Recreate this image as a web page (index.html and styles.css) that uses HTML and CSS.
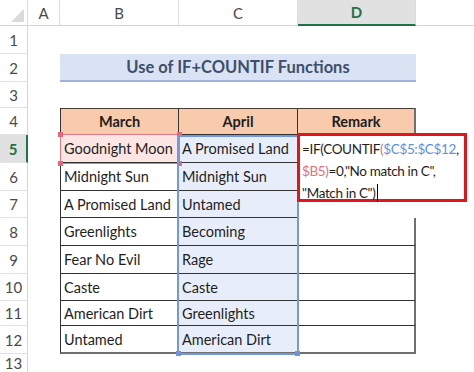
FILE: index.html
```html
<!DOCTYPE html>
<html>
  <head>
    <meta charset="utf-8" />
    <title>Use of IF+COUNTIF Functions</title>
    <link rel="stylesheet" href="styles.css">
  </head>
  <body>
    <main class="sheet">
      <div class="corner"><span class="tri"></span></div>
      <div class="col-head">A</div>
      <div class="col-head">B</div>
      <div class="col-head">C</div>
      <div class="col-head active">D</div>
      <div class="col-head last"></div>

      <div class="rn">1</div>
      <div class="rn">2</div>
      <div class="title">Use of IF+COUNTIF Functions</div>
      <div class="rn">3</div>
      <div class="rn">4</div>
      <div class="th b">March</div>
      <div class="th c">April</div>
      <div class="th d">Remark</div>

      <div class="rn active">5</div>
      <div class="td b sel-b">Goodnight Moon</div>
      <div class="td c sel">A Promised Land</div>
      <div class="td d open"></div>
      <div class="rn">6</div>
      <div class="td b">Midnight Sun</div>
      <div class="td c sel">Midnight Sun</div>
      <div class="td d open"></div>
      <div class="rn">7</div>
      <div class="td b">A Promised Land</div>
      <div class="td c sel">Untamed</div>
      <div class="td d open"></div>
      <div class="rn">8</div>
      <div class="td b">Greenlights</div>
      <div class="td c sel">Becoming</div>
      <div class="td d"></div>
      <div class="rn">9</div>
      <div class="td b">Fear No Evil</div>
      <div class="td c sel">Rage</div>
      <div class="td d"></div>
      <div class="rn">10</div>
      <div class="td b">Caste</div>
      <div class="td c sel">Caste</div>
      <div class="td d"></div>
      <div class="rn">11</div>
      <div class="td b">American Dirt</div>
      <div class="td c sel">Greenlights</div>
      <div class="td d"></div>
      <div class="rn">12</div>
      <div class="td b bottom">Untamed</div>
      <div class="td c sel bottom">American Dirt</div>
      <div class="td d bottom"></div>
      <div class="rn">13</div>

      <!-- overlays -->
      <div class="range-b">
        <i class="h tl"></i><i class="h tr"></i><i class="h bl"></i><i class="h br"></i>
      </div>
      <div class="range-c">
        <i class="h bl"></i><i class="h br"></i>
      </div>
      <div class="editor">=IF(COUNTIF<span class="ref-red">(</span><span class="ref-blue">$C$5:$C$12</span>,<br><span class="ref-red">$B5)</span>=0,"No match in C",<br>"Match in C")<span class="caret"></span></div>
    </main>
  </body>
</html>
```
FILE: styles.css
```css
html,
body {
  margin: 0;
  background: #fff;
}
*,
*:before,
*:after {
  box-sizing: border-box;
}
.sheet {
  position: relative;
  width: 474px;
  height: 372px;
  overflow: hidden;
  display: grid;
  grid-template-columns: 28px 32px 119px 119px 118px 1fr;
  grid-template-rows: 26px 28px 28px 26px 27px 28px 28px 27px 28px 28px 27px 25px 28px 1fr;
  font-family: Lato, "Open Sans", sans-serif;
  font-size: 14.5px;
  color: #1e1e1e;
}
.corner {
  grid-column: 1;
  position: relative;
  border-right: 1px solid #dcdcdc;
  border-bottom: 1px solid #d4d4d4;
}
.tri {
  position: absolute;
  right: 3px;
  bottom: 3px;
  width: 13px;
  height: 13px;
  background: #dadada;
  clip-path: polygon(100% 0, 100% 100%, 0 100%);
}
.col-head {
  display: flex;
  align-items: center;
  justify-content: center;
  color: #4a4a4a;
  font-size: 15px;
  border-right: 1px solid #dcdcdc;
  border-bottom: 1px solid #d4d4d4;
}
.col-head.active {
  background: #e1e1e1;
  color: #217346;
  font-weight: bold;
  border-bottom: 2px solid #217346;
}
.col-head.last {
  border-right: 0;
}
.rn {
  grid-column: 1;
  display: flex;
  align-items: center;
  justify-content: center;
  color: #4a4a4a;
  font-size: 15px;
  border-right: 1px solid #d6d6d6;
  border-bottom: 1px solid #e2e2e2;
}
.rn.active {
  background: #e1e1e1;
  color: #217346;
  font-weight: bold;
  border-right: 2px solid #217346;
}
.title {
  grid-column: 3 / 6;
  display: flex;
  align-items: center;
  justify-content: center;
  background: #dae3f3;
  border-bottom: 2px solid #9db3de;
  color: #3d4f6b;
  font-size: 16.5px;
  font-weight: bold;
}
.b {
  grid-column: 3;
  border-left: 1px solid #333;
}
.c {
  grid-column: 4;
}
.d {
  grid-column: 5;
}
.th,
.td {
  display: flex;
  align-items: center;
  white-space: nowrap;
  border-right: 1px solid #333;
  border-bottom: 1px solid #333;
}
.th {
  justify-content: center;
  background: #f8cbad;
  font-weight: bold;
  border-top: 1px solid #4a3b33;
}
.th.d,
.td.d {
  border-right: 2px solid #707070;
}
.td {
  padding-left: 3px;
}
.td.d.open {
  border-right: 0;
  border-bottom: 0;
}
.td.bottom {
  border-bottom: 2px solid #707070;
}
.sel {
  background: #e8eef9;
}
.sel-b {
  background: #fbe6e4;
}
.range-b,
.range-c,
.editor {
  position: absolute;
}
.range-b {
  grid-column: 3 / 4;
  grid-row: 6 / 7;
  inset: -1px -1px -1px 0;
  border: 1px solid #e27784;
}
.range-c {
  grid-column: 4 / 5;
  grid-row: 6 / 14;
  inset: 0 -1px -1px -2px;
  border: 2px solid #7497dd;
}
.h {
  position: absolute;
  width: 5px;
  height: 5px;
}
.range-b .h {
  background: #e06a79;
}
.range-c .h {
  background: #6f93dc;
}
.h.tl { left: -3px; top: -3px; }
.h.tr { right: -3px; top: -3px; }
.h.bl { left: -3px; bottom: -3px; }
.h.br { right: -3px; bottom: -3px; }
.editor {
  grid-column: 5 / 7;
  grid-row: 6 / 9;
  top: -2px;
  left: -1px;
  width: 170px;
  height: 69px;
  background: #fff;
  border: 3px solid #e3141b;
  padding: 2px 0 0 2px;
  line-height: 22px;
  font-size: 13.5px;
  letter-spacing: -0.35px;
  color: #1e1e1e;
  white-space: nowrap;
  z-index: 2;
}
.ref-red {
  color: #e4707a;
}
.ref-blue {
  color: #5d8fe6;
}
.caret {
  display: inline-block;
  width: 1px;
  height: 18px;
  margin-left: 1px;
  vertical-align: -4px;
  background: #000;
}
```
